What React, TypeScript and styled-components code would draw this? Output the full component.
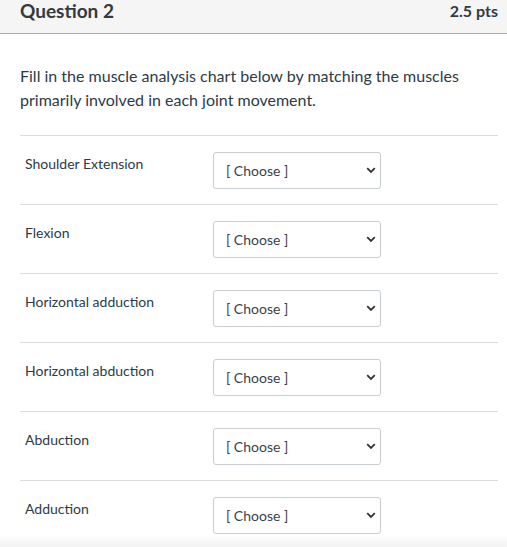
import React from "react";
import styled, { createGlobalStyle } from "styled-components";

const Global = createGlobalStyle`
  html, body { margin: 0; padding: 0; background: #fff; }
  body { font-family: Lato, "Noto Sans", sans-serif; color: #2d3b45; }
`;

const Page = styled.div`
  width: 507px;
`;

const Header = styled.div`
  height: 33px;
  background: #f5f5f5;
  border-bottom: 1px solid #a8a8a8;
  display: flex;
  justify-content: space-between;
  align-items: flex-start;
  padding: 0 9px 0 20px;
`;

const Title = styled.div`
  font-weight: 700;
  font-size: 19px;
  line-height: 22px;
  color: #333a40;
`;

const Points = styled.div`
  font-weight: 700;
  font-size: 16px;
  line-height: 22px;
  color: #333a40;
`;

const Body = styled.div`
  padding: 30px 9px 0 20px;
`;

const Prompt = styled.p`
  margin: 0 0 23px;
  font-size: 16px;
  line-height: 24px;
  color: #2d3b45;
`;

const Row = styled.div`
  border-top: 1px solid #dcdcdc;
  height: 68px;
  display: flex;
  align-items: flex-start;
`;

const Label = styled.div`
  width: 188px;
  padding: 19px 0 0 5px;
  font-size: 14px;
  line-height: 17px;
  color: #2d3b45;
`;

const SelectWrap = styled.div`
  position: relative;
  margin-top: 16px;
  width: 168px;
  height: 37px;
`;

const Select = styled.select`
  appearance: none;
  -webkit-appearance: none;
  width: 100%;
  height: 100%;
  box-sizing: border-box;
  border: 1px solid #c7cdd1;
  border-radius: 3px;
  background: #fff;
  padding: 0 0 0 12px;
  font-family: Lato, "Noto Sans", sans-serif;
  font-size: 14px;
  color: #3a4248;
  outline: none;
`;

const Chevron = styled.svg`
  position: absolute;
  right: 5px;
  top: 15px;
  pointer-events: none;
`;

const BottomFade = styled.div`
  position: fixed;
  left: 0;
  right: 0;
  bottom: 0;
  height: 12px;
  background: linear-gradient(to bottom, rgba(245, 245, 245, 0), #f3f3f3);
  pointer-events: none;
`;

const movements = [
  "Shoulder Extension",
  "Flexion",
  "Horizontal adduction",
  "Horizontal abduction",
  "Abduction",
  "Adduction",
];

export default function App() {
  return (
    <Page>
      <Global />
      <Header>
        <Title>Question 2</Title>
        <Points>2.5 pts</Points>
      </Header>
      <Body>
        <Prompt>
          Fill in the muscle analysis chart below by matching the muscles
          primarily involved in each joint movement.
        </Prompt>
        {movements.map((m) => (
          <Row key={m}>
            <Label>{m}</Label>
            <SelectWrap>
              <Select defaultValue="">
                <option value="">[ Choose ]</option>
              </Select>
              <Chevron width="10" height="7" viewBox="0 0 10 7">
                <path d="M1.2 1.2 L5 5 L8.8 1.2" fill="none" stroke="#333" strokeWidth="1.8" />
              </Chevron>
            </SelectWrap>
          </Row>
        ))}
      </Body>
      <BottomFade />
    </Page>
  );
}
